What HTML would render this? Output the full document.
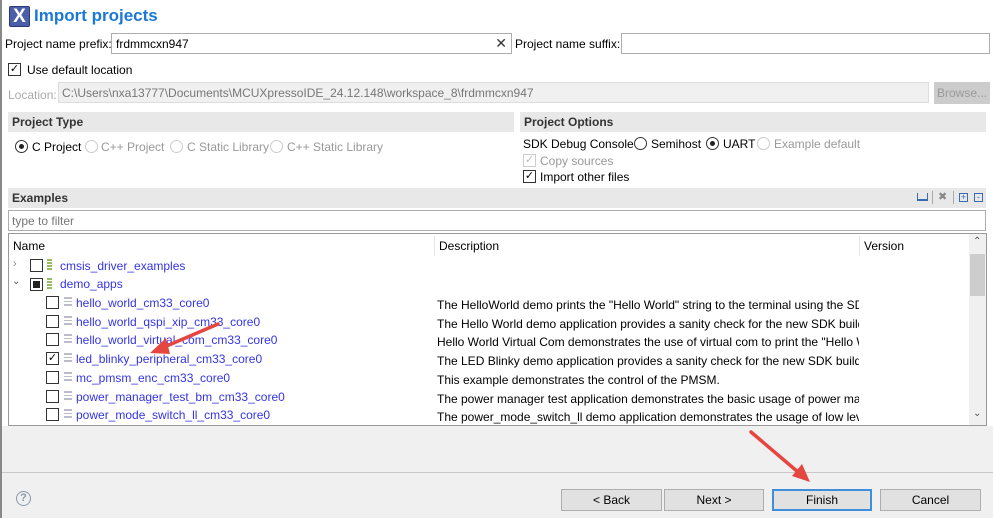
<!DOCTYPE html>
<html><head><meta charset="utf-8"><style>
*{box-sizing:border-box;margin:0;padding:0}
body{width:993px;height:518px;overflow:hidden;background:#fff;font-family:"Liberation Sans",sans-serif;font-size:12px;color:#000;position:relative}
.a{position:absolute;white-space:nowrap}
.inp{position:absolute;border:1px solid #adadad;background:#fff}
.hdr{position:absolute;background:#e8e8e8;font-weight:bold;color:#333;padding:3px 0 0 4px;height:20px}
.cb{position:absolute;width:13px;height:13px;border:1px solid #333;background:#fff}
.rd{position:absolute;width:13px;height:13px;border:1px solid #333;border-radius:50%;background:#fff}
.rd.on::after{content:"";position:absolute;left:3px;top:3px;width:5px;height:5px;border-radius:50%;background:#222}
.rd.dis{border-color:#ccc}
.blue{color:#3434e6}
.btn{position:absolute;top:489px;height:22px;border:1px solid #adadad;background:#e1e1e1;text-align:center;line-height:20px;font-size:12px}
.doc{position:absolute;width:8px;height:9px;border-top:2px solid #bbc;border-bottom:2px solid #bbc}
.doc::after{content:"";position:absolute;left:0;top:2px;width:8px;height:1px;background:#bbc}
</style></head><body>
<div class="a" style="left:0;top:0;width:2px;height:518px;background:#888"></div>
<!-- title -->
<div class="a" style="left:9px;top:6px;width:21px;height:21px;background:#4a5fa8;border:1px solid #2a3a78;border-radius:2px;color:#fff;font-weight:bold;font-size:19px;line-height:19px;text-align:center">X</div>
<div class="a" style="left:34px;top:6px;font-size:17px;font-weight:bold;color:#1b78d6">Import projects</div>
<!-- prefix -->
<div class="a" style="left:5px;top:37px">Project name prefix:</div>
<div class="inp" style="left:111px;top:33px;width:401px;height:21px;padding:3px 4px">frdmmcxn947<span style="position:absolute;right:4px;top:1px;font-size:14px;color:#333">✕</span></div>
<div class="a" style="left:515px;top:37px">Project name suffix:</div>
<div class="inp" style="left:621px;top:33px;width:369px;height:21px"></div>
<!-- default location -->
<div class="cb" style="left:8px;top:63px;font-size:11px;line-height:11px;text-align:center">✓</div>
<div class="a" style="left:27px;top:63px">Use default location</div>
<div class="a" style="left:8px;top:88px;color:#aaa">Location:</div>
<div class="inp" style="left:58px;top:82px;width:871px;height:21px;background:#f0f0f0;border-color:#ddd;color:#777;padding:3px 3px">C:\Users\nxa13777\Documents\MCUXpressoIDE_24.12.148\workspace_8\frdmmcxn947</div>
<div class="a" style="left:934px;top:82px;width:56px;height:22px;background:#ccc;color:#999;text-align:center;line-height:22px">Browse...</div>
<!-- project type -->
<div class="hdr" style="left:8px;top:112px;width:506px">Project Type</div>
<div class="rd on" style="left:15px;top:140px"></div><div class="a" style="left:32px;top:140px">C Project</div>
<div class="rd dis" style="left:85px;top:140px"></div><div class="a" style="left:101px;top:140px;color:#999">C++ Project</div>
<div class="rd dis" style="left:170px;top:140px"></div><div class="a" style="left:187px;top:140px;color:#999">C Static Library</div>
<div class="rd dis" style="left:270px;top:140px"></div><div class="a" style="left:287px;top:140px;color:#999">C++ Static Library</div>
<!-- options -->
<div class="hdr" style="left:520px;top:112px;width:466px">Project Options</div>
<div class="a" style="left:523px;top:137px">SDK Debug Console</div>
<div class="rd" style="left:634px;top:137px"></div><div class="a" style="left:651px;top:137px">Semihost</div>
<div class="rd on" style="left:706px;top:137px"></div><div class="a" style="left:723px;top:137px">UART</div>
<div class="rd dis" style="left:757px;top:137px"></div><div class="a" style="left:774px;top:137px;color:#999">Example default</div>
<div class="cb" style="left:523px;top:154px;border-color:#ccc;color:#bbb;font-size:11px;line-height:11px;text-align:center">✓</div><div class="a" style="left:540px;top:154px;color:#999">Copy sources</div>
<div class="cb" style="left:523px;top:170px;font-size:11px;line-height:11px;text-align:center">✓</div><div class="a" style="left:540px;top:170px">Import other files</div>
<!-- examples -->
<div class="hdr" style="left:8px;top:188px;width:978px">Examples</div>
<div class="a" style="left:917px;top:193px;width:11px;height:8px;border-bottom:2px solid #3a6ab0;border-left:1px solid #3a6ab0;border-right:1px solid #3a6ab0"></div>
<div class="a" style="left:932px;top:191px;width:1px;height:13px;background:#aaa"></div>
<div class="a" style="left:938px;top:190px;color:#888;font-size:11px">✖</div>
<div class="a" style="left:953px;top:191px;width:1px;height:13px;background:#aaa"></div>
<div class="a" style="left:959px;top:193px;width:9px;height:9px;border:1px solid #3a6ab0;font-size:9px;line-height:7px;text-align:center;color:#3a6ab0">+</div>
<div class="a" style="left:974px;top:193px;width:9px;height:9px;border:1px solid #3a6ab0;font-size:9px;line-height:6px;text-align:center;color:#3a6ab0">-</div>
<div class="inp" style="left:8px;top:210px;width:978px;height:21px;color:#777;padding:3px 3px">type to filter</div>
<!-- table -->
<div class="inp" style="left:8px;top:233px;width:979px;height:193px;border-color:#999"></div>
<div class="a" style="left:13px;top:239px">Name</div>
<div class="a" style="left:434px;top:236px;width:1px;height:20px;background:#e5e5e5"></div>
<div class="a" style="left:439px;top:239px">Description</div>
<div class="a" style="left:859px;top:236px;width:1px;height:20px;background:#e5e5e5"></div>
<div class="a" style="left:864px;top:239px">Version</div>
<div class="a" style="left:969px;top:234px;width:17px;height:191px;background:#f0f0f0"></div>
<div class="a" style="left:970px;top:254px;width:15px;height:42px;background:#cdcdcd"></div>
<div class="a" style="left:973px;top:236px;font-size:10px;color:#555">⌃</div>
<div class="a" style="left:973px;top:408px;font-size:10px;color:#555">⌄</div>

<div class="a" style="left:13px;top:258px;color:#888;font-size:11px">›</div>
<div class="cb" style="left:30px;top:259px"></div>
<div class="a" style="left:47px;top:259px;width:5px;height:11px;background:repeating-linear-gradient(#9b6 0 2px,#fff 2px 3px)"></div>
<div class="a blue" style="left:60px;top:259px">cmsis_driver_examples</div>
<div class="a" style="left:12px;top:276px;color:#555;font-size:10px">⌄</div>
<div class="cb" style="left:30px;top:278px"><div style="margin:2px;width:7px;height:7px;background:#222"></div></div>
<div class="a" style="left:47px;top:278px;width:5px;height:11px;background:repeating-linear-gradient(#9b6 0 2px,#fff 2px 3px)"></div>
<div class="a blue" style="left:60px;top:277px">demo_apps</div>

<div class="cb" style="left:46px;top:296px"></div><div class="doc" style="left:64px;top:297px"></div><div class="a blue" style="left:76px;top:296px">hello_world_cm33_core0</div>
<div class="cb" style="left:46px;top:315px"></div><div class="doc" style="left:64px;top:316px"></div><div class="a blue" style="left:76px;top:315px">hello_world_qspi_xip_cm33_core0</div>
<div class="cb" style="left:46px;top:333px"></div><div class="doc" style="left:64px;top:334px"></div><div class="a blue" style="left:76px;top:333px">hello_world_virtual_com_cm33_core0</div>
<div class="cb" style="left:46px;top:352px;font-size:11px;line-height:11px;text-align:center">✓</div><div class="doc" style="left:64px;top:353px"></div><div class="a blue" style="left:76px;top:352px">led_blinky_peripheral_cm33_core0</div>
<div class="cb" style="left:46px;top:371px"></div><div class="doc" style="left:64px;top:372px"></div><div class="a blue" style="left:76px;top:371px">mc_pmsm_enc_cm33_core0</div>
<div class="cb" style="left:46px;top:390px"></div><div class="doc" style="left:64px;top:391px"></div><div class="a blue" style="left:76px;top:390px">power_manager_test_bm_cm33_core0</div>
<div class="cb" style="left:46px;top:408px"></div><div class="doc" style="left:64px;top:409px"></div><div class="a blue" style="left:76px;top:408px">power_mode_switch_ll_cm33_core0</div>

<div style="position:absolute;left:437px;top:296px;width:422px;overflow:hidden;line-height:18.7px">
<div class="a" style="position:static">The HelloWorld demo prints the "Hello World" string to the terminal using the SDK UART drivers</div>
<div style="white-space:nowrap">The Hello World demo application provides a sanity check for the new SDK build environment</div>
<div style="white-space:nowrap">Hello World Virtual Com demonstrates the use of virtual com to print the "Hello World"</div>
<div style="white-space:nowrap">The LED Blinky demo application provides a sanity check for the new SDK build environment</div>
<div style="white-space:nowrap">This example demonstrates the control of the PMSM.</div>
<div style="white-space:nowrap">The power manager test application demonstrates the basic usage of power manager</div>
<div style="white-space:nowrap">The power_mode_switch_ll demo application demonstrates the usage of low level</div>
</div>
<!-- bottom -->
<div class="a" style="left:2px;top:426px;width:991px;height:92px;background:#f0f0f0"></div>
<div class="a" style="left:2px;top:472px;width:991px;height:1px;background:#c8c8c8"></div>
<div class="a" style="left:16px;top:491px;width:15px;height:15px;border:1px solid #8898aa;border-radius:50%;color:#8898aa;font-size:11px;font-weight:bold;text-align:center;line-height:13px">?</div>
<div class="btn" style="left:561px;width:101px">&lt; Back</div>
<div class="btn" style="left:664px;width:100px">Next &gt;</div>
<div class="btn" style="left:772px;width:100px;border:2px solid #3c8fd8;line-height:18px">Finish</div>
<div class="btn" style="left:880px;width:101px">Cancel</div>
<!-- arrows -->
<svg class="a" style="left:0;top:0" width="993" height="518">
<line x1="218" y1="324" x2="162" y2="348" stroke="#e64640" stroke-width="3.5" stroke-linecap="round"/>
<polygon points="150,353 166,338 170,354" fill="#e64640"/>
<line x1="751" y1="432" x2="798" y2="472" stroke="#e64640" stroke-width="3.5" stroke-linecap="round"/>
<polygon points="810,482 792,476 802,464" fill="#e64640"/>
</svg>
</body></html>
